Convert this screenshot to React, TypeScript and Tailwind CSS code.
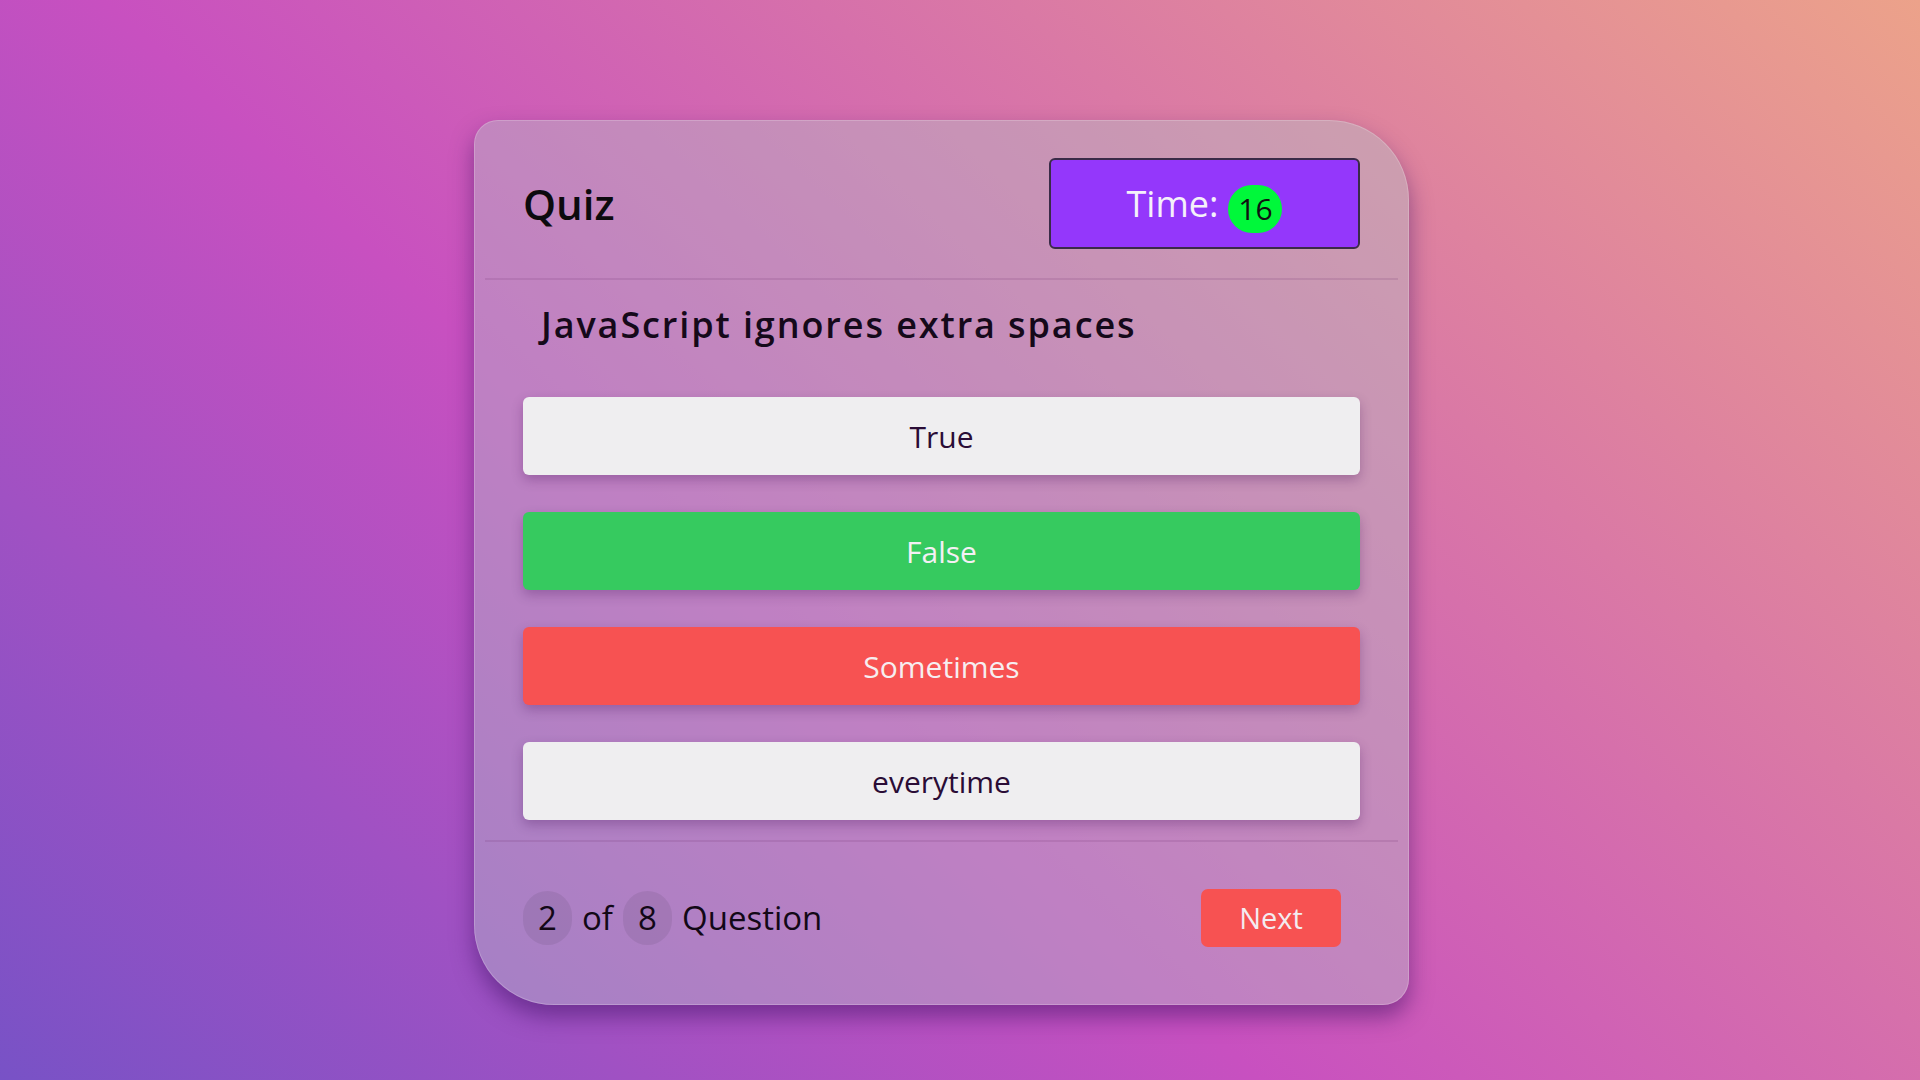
import React from 'react';

const options = [
  { label: 'True', tone: 'idle' },
  { label: 'False', tone: 'right' },
  { label: 'Sometimes', tone: 'wrong' },
  { label: 'everytime', tone: 'idle' },
];

const toneClass: Record<string, string> = {
  idle: 'bg-[#efeef0] text-[#2a0c36]',
  right: 'bg-[#36ca5f] text-[#f4f0f4]',
  wrong: 'bg-[#f75252] text-[#f6eef0]',
};

const App = () => {
  return (
    <div
      className="w-full min-h-screen bg-[linear-gradient(43deg,#7852c6_0%,#c850c0_41%,#eca28a_100%)] pl-[474px] pt-[120px] pb-[75px]"
      style={{ fontFamily: '"Open Sans", "Noto Sans", sans-serif' }}
    >
      <div className="w-[935px] rounded-tl-[24px] rounded-tr-[80px] rounded-br-[26px] rounded-bl-[80px] bg-[rgba(180,196,200,0.41)] border border-white/20 shadow-[0_12px_22px_rgba(60,15,100,0.5)] flex flex-col">
        {/* header */}
        <div className="flex items-center justify-between pl-[48px] pr-[48px] pt-[37px] pb-[29px]">
          <h1 className="text-[42px] font-semibold text-[#0c0a0e] leading-none">Quiz</h1>
          <div className="w-[311px] h-[91px] rounded-[6px] bg-[#9437fb] border-2 border-[#3a2b48] flex items-center justify-center gap-[10px]">
            <span className="text-[36px] text-[#f5f0fa] leading-none">Time:</span>
            <span className="mt-[10px] w-[54px] h-[48px] rounded-full bg-[#00f83a] text-[30px] text-[#111] flex items-center justify-center leading-none">
              16
            </span>
          </div>
        </div>
        <div className="mx-[10px] h-[2px] bg-[rgba(110,50,110,0.16)]" />

        {/* question */}
        <p className="pl-[66px] pt-[18px] text-[36px] leading-[54px] font-semibold tracking-[1.9px] text-[#15091a]">
          JavaScript ignores extra spaces
        </p>

        <div className="flex flex-col gap-[37px] px-[48px] pt-[45px]">
          {options.map((o) => (
            <button
              key={o.label}
              className={`h-[78px] w-full rounded-[6px] text-[30px] shadow-[0_5px_12px_rgba(70,20,90,0.3)] flex items-center justify-center ${toneClass[o.tone]}`}
            >
              {o.label}
            </button>
          ))}
        </div>

        <div className="mx-[10px] mt-[20px] h-[2px] bg-[rgba(110,50,110,0.16)]" />

        {/* footer */}
        <div className="flex items-center justify-between pl-[48px] pr-[67px] pt-[47px] pb-[57px]">
          <div className="flex items-center gap-[10px] text-[33px] text-[#120816]">
            <span className="w-[49px] h-[54px] rounded-full bg-black/[0.07] flex items-center justify-center">2</span>
            <span>of</span>
            <span className="w-[49px] h-[54px] rounded-full bg-black/[0.07] flex items-center justify-center">8</span>
            <span>Question</span>
          </div>
          <button className="w-[140px] h-[58px] rounded-[7px] bg-[#f75252] text-[29px] text-[#f3ecf0] flex items-center justify-center">
            Next
          </button>
        </div>
      </div>
    </div>
  );
};

export default App;
